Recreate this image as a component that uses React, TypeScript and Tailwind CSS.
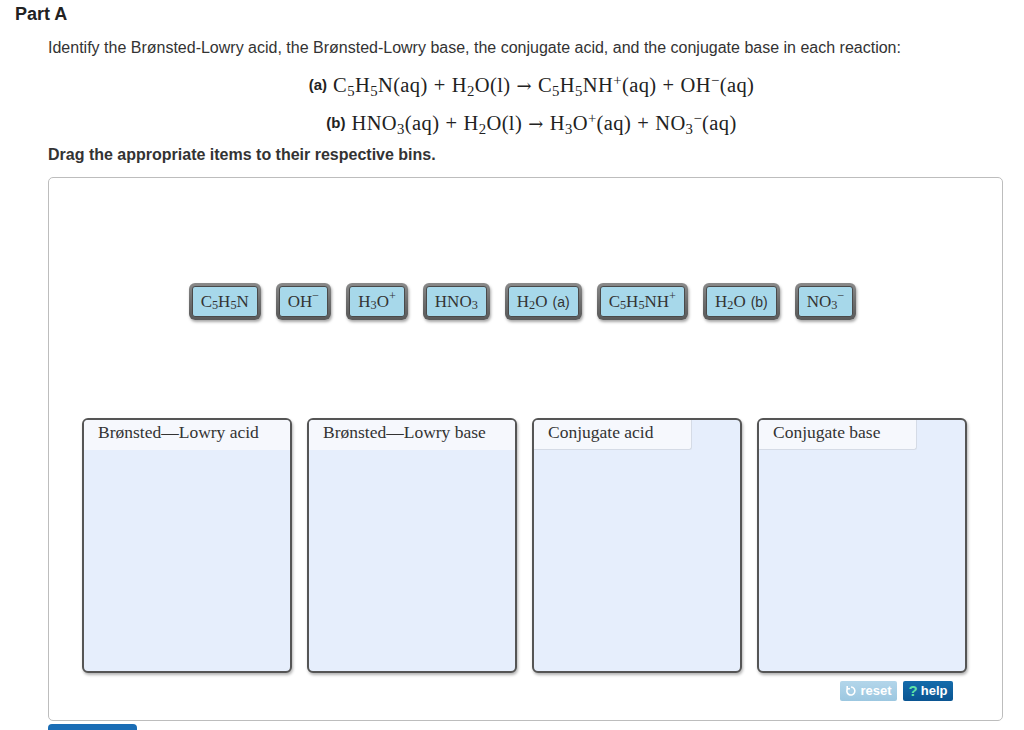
import type { ReactNode } from 'react'

const serif = "font-['Liberation_Serif','DejaVu_Serif',serif]"

function Sub({ children }: { children: ReactNode }) {
  return <span className="text-[0.72em] relative top-[0.28em] leading-none">{children}</span>
}

function Sup({ children }: { children: ReactNode }) {
  return <span className="text-[0.72em] relative -top-[0.42em] leading-none">{children}</span>
}

function Op({ children }: { children: ReactNode }) {
  return <span className="mx-[6px]">{children}</span>
}

function Arrow() {
  return <span className="mx-[6px] font-['DejaVu_Serif',serif] text-[18px]">→</span>
}

function Equation({ tag, children }: { tag: string; children: ReactNode }) {
  return (
    <div className="h-[24px] flex items-center justify-center">
      <span className="text-[15px] font-bold mr-[6px] text-[#222]">{tag}</span>
      <span className={`${serif} text-[20.5px] leading-[24px] text-[#222] tracking-[0.4px]`}>{children}</span>
    </div>
  )
}

function Tile({ children }: { children: ReactNode }) {
  return (
    <div className="rounded-[6px] p-[3px] bg-gradient-to-b from-[#8a8a8a] via-[#6e6e6e] to-[#5a5a5a] shadow-[1px_2px_3px_rgba(0,0,0,0.35)]">
      <div className={`h-[31px] flex items-center px-[8px] rounded-[3px] border border-[#4a4a4a] bg-[#a7d8ea] ${serif} text-[17px] leading-none text-[#333]`}>
        {children}
      </div>
    </div>
  )
}

function Bin({ label, full }: { label: string; full?: boolean }) {
  return (
    <div className="w-[210px] h-[255px] rounded-[6px] border-2 border-[#555] bg-[#e6eefc] shadow-[1px_2px_3px_rgba(0,0,0,0.3)] overflow-hidden">
      <div
        className={`h-[30px] bg-[#f6f8fd] pl-[14px] ${serif} text-[17.5px] leading-[24px] text-[#333] ${
          full ? 'w-full' : 'w-[158px] border-r border-b border-[#d5dbe6] rounded-br-[3px]'
        }`}
      >
        {label}
      </div>
    </div>
  )
}

export default function App() {
  return (
    <div className="w-[1024px] h-[730px] overflow-hidden bg-white font-['Liberation_Sans',Arial,sans-serif] text-[#333]">
      <h2 className="pl-[15px] pt-[3px] text-[18px] font-bold text-[#222] leading-[22px]">Part A</h2>

      <div className="pl-[48px] pr-[21px]">
        <p className="mt-[14px] text-[16px] leading-[18px]">
          Identify the Brønsted-Lowry acid, the Brønsted-Lowry base, the conjugate acid, and the conjugate base in each reaction:
        </p>

        <div className="mt-[16px] ml-[12px] flex flex-col gap-[14px]">
          <Equation tag="(a)">
            C<Sub>5</Sub>H<Sub>5</Sub>N(aq)<Op>+</Op>H<Sub>2</Sub>O(l)<Arrow />C<Sub>5</Sub>H<Sub>5</Sub>NH<Sup>+</Sup>(aq)<Op>+</Op>OH<Sup>−</Sup>(aq)
          </Equation>
          <Equation tag="(b)">
            HNO<Sub>3</Sub>(aq)<Op>+</Op>H<Sub>2</Sub>O(l)<Arrow />H<Sub>3</Sub>O<Sup>+</Sup>(aq)<Op>+</Op>NO<Sub>3</Sub>
            <Sup>−</Sup>(aq)
          </Equation>
        </div>

        <p className="mt-[11px] text-[16px] font-bold leading-[18px]">Drag the appropriate items to their respective bins.</p>

        <div className="mt-[13px] h-[544px] rounded-[5px] border border-[#bdbdbd] flex flex-col">
          <div className="mt-[105px] flex justify-center gap-[15px] pr-[6px]">
            <Tile>C<Sub>5</Sub>H<Sub>5</Sub>N</Tile>
            <Tile>OH<Sup>−</Sup></Tile>
            <Tile>H<Sub>3</Sub>O<Sup>+</Sup></Tile>
            <Tile>HNO<Sub>3</Sub></Tile>
            <Tile>
              H<Sub>2</Sub>O<span className="font-['Liberation_Sans',sans-serif] text-[14px] ml-[5px]">(a)</span>
            </Tile>
            <Tile>C<Sub>5</Sub>H<Sub>5</Sub>NH<Sup>+</Sup></Tile>
            <Tile>
              H<Sub>2</Sub>O<span className="font-['Liberation_Sans',sans-serif] text-[14px] ml-[5px]">(b)</span>
            </Tile>
            <Tile>NO<Sub>3</Sub><Sup>−</Sup></Tile>
          </div>

          <div className="mt-[98px] flex justify-center gap-[15px] pr-[2px]">
            <Bin label="Brønsted—Lowry acid" full />
            <Bin label="Brønsted—Lowry base" full />
            <Bin label="Conjugate acid" />
            <Bin label="Conjugate base" />
          </div>

          <div className="mt-[8px] flex justify-end gap-[6px] pr-[49px]">
            <button className="h-[20px] w-[57px] flex items-center justify-center gap-[3px] rounded-[2px] bg-gradient-to-b from-[#b3d6ea] to-[#9cc7e0] text-white text-[13px] font-bold">
              <svg width="12" height="12" viewBox="0 0 12 12" fill="none" stroke="white" strokeWidth="1.6">
                <path d="M3 3.2A4 4 0 1 0 6 2" />
                <path d="M2.2 1v2.8H5" />
              </svg>
              reset
            </button>
            <button className="h-[20px] w-[50px] flex items-center justify-center gap-[3px] rounded-[2px] bg-gradient-to-b from-[#146cab] to-[#0a5592] text-white text-[13px] font-bold">
              <span className="text-[#5fe3a7] text-[15px]">?</span>help
            </button>
          </div>
        </div>

        <div className="mt-[3px] w-[89px] h-[10px] rounded-t-[4px] bg-[#1a6db5]" />
      </div>
    </div>
  )
}
